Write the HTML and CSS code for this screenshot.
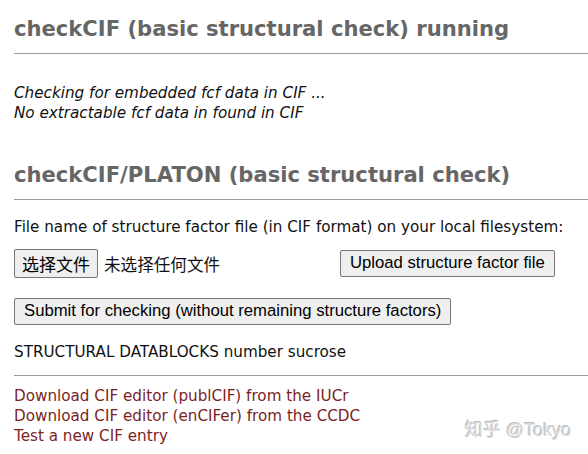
FILE: index.html
```html
<!DOCTYPE html>
<html lang="en">

<head>
    <meta charset="UTF-8">
    <meta name="viewport" content="width=device-width, initial-scale=1.0">
    <title>checkCIF</title>
    <link rel="stylesheet" href="styles.css">
</head>

<body>
    <h2>checkCIF (basic structural check) running</h2>
    <hr>

    <p class="status">
        Checking for embedded fcf data in CIF ...<br>
        No extractable fcf data in found in CIF
    </p>

    <h2>checkCIF/PLATON (basic structural check)</h2>
    <hr>

    <form onsubmit="return false;">
        <p>File name of structure factor file (in CIF format) on your local filesystem:</p>

        <div class="upload-row">
            <div class="file-pick">
                <button type="button" class="file-btn">选择文件</button>
                <span class="file-name">未选择任何文件</span>
            </div>
            <button type="button">Upload structure factor file</button>
        </div>

        <div class="submit-row">
            <button type="button">Submit for checking (without remaining structure factors)</button>
        </div>
    </form>

    <p class="datablocks">STRUCTURAL DATABLOCKS number sucrose</p>
    <hr>

    <div class="links">
        <a href="#">Download CIF editor (publCIF) from the IUCr</a><br>
        <a href="#">Download CIF editor (enCIFer) from the CCDC</a><br>
        <a href="#">Test a new CIF entry</a>
    </div>

    <div class="watermark">知乎 @Tokyo</div>
</body>

</html>
```

FILE: styles.css
```css
* {
    font-family: 'DejaVu Sans', Verdana, sans-serif;
}

body {
    margin: 0 0 0 14px;
    color: #111;
    background-color: #FFFFFF;
    font-size: 15.2px;
}

h2 {
    color: #666666;
    font-size: 21.1px;
    margin: 16px 0 12px 0;
}

hr {
    border: 0;
    border-top: 1px solid #9A9A9A;
    margin: 0;
}

p {
    margin: 0;
}

.status {
    font-style: italic;
    line-height: 20px;
    margin: 29px 0 39px 0;
}

form p {
    margin: 18px 0 13px 0;
}

button {
    font-family: 'Liberation Sans', Arial, sans-serif;
    font-size: 16.7px;
    color: #000;
    background-color: #EFEFEF;
    border: 1px solid #767676;
    border-radius: 2px;
    padding: 2px 9px 3px 9px;
}

.upload-row {
    display: flex;
    align-items: center;
}

.file-pick {
    width: 326px;
    display: flex;
    align-items: center;
    gap: 6px;
}

.file-btn {
    font-family: 'Noto Sans CJK SC', sans-serif;
    font-size: 17px;
    padding: 1px 7px;
}

.file-name {
    font-family: 'Noto Sans CJK SC', sans-serif;
    font-size: 16.6px;
}

.submit-row {
    margin: 20px 0 0 0;
}

.datablocks {
    margin: 18px 0 14px 0;
}

.links {
    line-height: 20px;
    margin-top: 10px;
}

.links a {
    color: #7B1F1F;
    text-decoration: none;
}

.watermark {
    position: absolute;
    left: 465px;
    top: 415px;
    font-family: 'Liberation Sans', 'Noto Sans CJK SC', sans-serif;
    font-size: 18px;
    color: #D6D6D6;
    text-shadow: 1px 1px 0 #FFFFFF, -1px -1px 0 #BDBDBD;
}
```
